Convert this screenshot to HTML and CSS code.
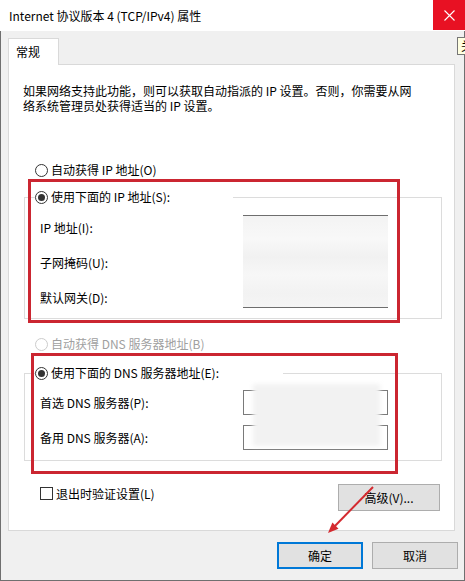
FILE: index.html
```html
<!DOCTYPE html>
<html lang="zh-CN">
<head>
<meta charset="utf-8">
<title>Internet 协议版本 4 (TCP/IPv4) 属性</title>
<link rel="stylesheet" href="styles.css">
</head>
<body>
<div class="window">
  <div class="titlebar">
    <span class="title">Internet 协议版本 4 (TCP/IPv4) 属性</span>
    <span class="close">
      <svg width="11" height="11" viewBox="0 0 11 11"><path d="M0.5 0.5 L10.5 10.5 M10.5 0.5 L0.5 10.5" stroke="#fff" stroke-width="1.1" fill="none"/></svg>
    </span>
  </div>
  <div class="client">
    <div class="tabs"><div class="tab">常规</div></div>
    <div class="panel">
      <p class="desc">如果网络支持此功能，则可以获取自动指派的 IP 设置。否则，你需要从网<br>络系统管理员处获得适当的 IP 设置。</p>
      <div class="radio r-auto-ip"><span class="dot"></span>自动获得 IP 地址(O)</div>
      <fieldset class="group g-ip">
        <legend class="legend-ip"><span class="radio checked"><span class="dot"></span>使用下面的 IP 地址(S):</span></legend>
        <div class="fields three">
          <span class="lbl">IP 地址(I):</span>
          <span class="lbl">子网掩码(U):</span>
          <span class="lbl">默认网关(D):</span>
          <div class="ip-blur"></div>
        </div>
      </fieldset>
      <div class="radio disabled r-auto-dns"><span class="dot"></span>自动获得 DNS 服务器地址(B)</div>
      <fieldset class="group g-dns">
        <legend class="legend-dns"><span class="radio checked"><span class="dot"></span>使用下面的 DNS 服务器地址(E):</span></legend>
        <div class="fields two">
          <span class="lbl">首选 DNS 服务器(P):</span>
          <span class="lbl">备用 DNS 服务器(A):</span>
          <div class="dns-inputs">
            <div class="input"></div>
            <div class="input"></div>
          </div>
        </div>
      </fieldset>
      <div class="check-row">
        <div class="checkbox"><span class="box"></span>退出时验证设置(L)</div>
        <div class="btn">高级(V)...</div>
      </div>
    </div>
    <div class="actions">
      <div class="btn btn-default">确定</div>
      <div class="btn">取消</div>
    </div>
  </div>
  <div class="tooltip">关闭</div>
  <div class="mark mark-ip"></div>
  <div class="mark mark-dns"></div>
  <svg class="arrow" width="465" height="581" viewBox="0 0 465 581">
    <line x1="373" y1="487" x2="333" y2="528" stroke="#d42a30" stroke-width="2"/>
    <polygon points="328,533 338.5,528.8 332.4,522.6" fill="#d42a30"/>
  </svg>
</div>
</body>
</html>
```

FILE: styles.css
```css
* { box-sizing: border-box; }
html, body { margin: 0; padding: 0; }
body {
  width: 465px;
  height: 581px;
  overflow: hidden;
  background: #f0f0f0;
  font-family: "Noto Sans CJK SC", "Noto Sans", sans-serif;
  font-size: 12px;
  color: #000;
}
.window { position: relative; width: 465px; height: 581px; }

.titlebar { height: 31px; background: #fff; display: flex; align-items: flex-start; }
.title { flex: 1; padding: 7px 0 0 9px; line-height: 17px; white-space: nowrap; }
.close {
  width: 32px; height: 30px; background: #e81123;
  display: flex; align-items: center; justify-content: center;
}

.client {
  height: 550px;
  border: 1px solid #6f6f6f;
  border-top: 0;
  background: #f0f0f0;
  padding: 7px 6px 0 7px;
  display: flex;
  flex-direction: column;
}
.tabs { display: flex; }
.tab {
  width: 51px; height: 27px;
  margin-bottom: -1px;
  position: relative; z-index: 1;
  background: #fff;
  border: 1px solid #d9d9d9; border-bottom: 0;
  padding: 5px 0 0 7px;
  line-height: 16px;
}
.panel {
  width: 447px; height: 467px;
  background: #fff;
  border: 1px solid #d9d9d9;
}
.desc { margin: 0; padding: 18px 0 0 14px; line-height: 15px; }

.radio {
  display: flex; align-items: center; gap: 3px;
  height: 16px; line-height: 16px; white-space: nowrap;
}
.dot {
  width: 13px; height: 13px; flex: none;
  border: 1px solid #333; border-radius: 50%; background: #fff;
  display: flex; align-items: center; justify-content: center;
}
.checked .dot::after {
  content: ""; width: 7px; height: 7px; border-radius: 50%; background: #333;
}
.disabled { color: #a0a0a0; }
.disabled .dot { border-color: #cccccc; }
.r-auto-ip { margin: 49px 0 0 26px; }
.r-auto-dns { margin: 17px 0 0 26px; }

.group {
  margin: 0 0 0 15px;
  width: 418px;
  border: 1px solid #dcdcdc;
  min-inline-size: 0;
}
.g-ip { margin-top: 11px; padding: 5px 0 3px 10px; }
.g-dns { margin-top: 13px; padding: 4px 0 5px 10px; }
.group legend { padding: 0; background: #fff; }
.legend-ip { width: 198px; }
.legend-dns { width: 248px; }

.fields {
  display: grid;
  grid-template-columns: 203px 145px;
  padding-left: 5px;
}
.three { grid-template-rows: repeat(3, 35px); }
.two { grid-template-rows: repeat(2, 35px); }
.lbl { grid-column: 1; display: flex; align-items: center; white-space: nowrap; }
.ip-blur {
  grid-column: 2; grid-row: 1 / 4;
  align-self: start;
  margin-top: 5px; height: 93px;
  border-top: 1px solid #6e6e6e;
  border-bottom: 1px solid #6e6e6e;
  background: linear-gradient(to bottom, #f3f3f3, #f8f8f8 25%, #f1f1f1 45%, #f7f7f7 65%, #f2f2f2 85%, #f5f5f5);
}
.dns-inputs {
  grid-column: 2; grid-row: 1 / 3;
  position: relative;
  padding-top: 5px;
  display: flex; flex-direction: column; gap: 10px;
}
.input { height: 25px; border: 1px solid #7a7a7a; background: #fff; }
.dns-inputs::after {
  content: "";
  position: absolute;
  left: 10px; top: -1px; width: 127px; height: 62px;
  background: #f2f2f2;
  filter: blur(2px);
}

.check-row {
  display: flex; justify-content: space-between; align-items: flex-start;
  margin-top: 23px;
  padding: 0 14px 0 31px;
}
.checkbox { display: flex; align-items: center; gap: 3px; height: 16px; margin-top: 1px; white-space: nowrap; }
.box { width: 13px; height: 13px; border: 1px solid #333; background: #fff; }

.btn {
  width: 102px; height: 27px;
  background: #e1e1e1;
  border: 1px solid #adadad;
  display: flex; align-items: center; justify-content: center;
}
.actions { display: flex; justify-content: flex-end; gap: 9px; margin-top: 11px; }
.actions .btn { width: 86px; }
.btn-default { border: 2px solid #0078d7; }

.tooltip {
  position: absolute; left: 457px; top: 37px;
  height: 18px; padding: 0 3px;
  background: #ffffe1; border: 1px solid #767676;
  line-height: 16px; white-space: nowrap;
}
.mark { position: absolute; border: 3px solid #cb2631; }
.mark-ip { left: 28px; top: 179px; width: 372px; height: 144px; }
.mark-dns { left: 31px; top: 353px; width: 367px; height: 121px; }
.arrow { position: absolute; left: 0; top: 0; pointer-events: none; }
```
